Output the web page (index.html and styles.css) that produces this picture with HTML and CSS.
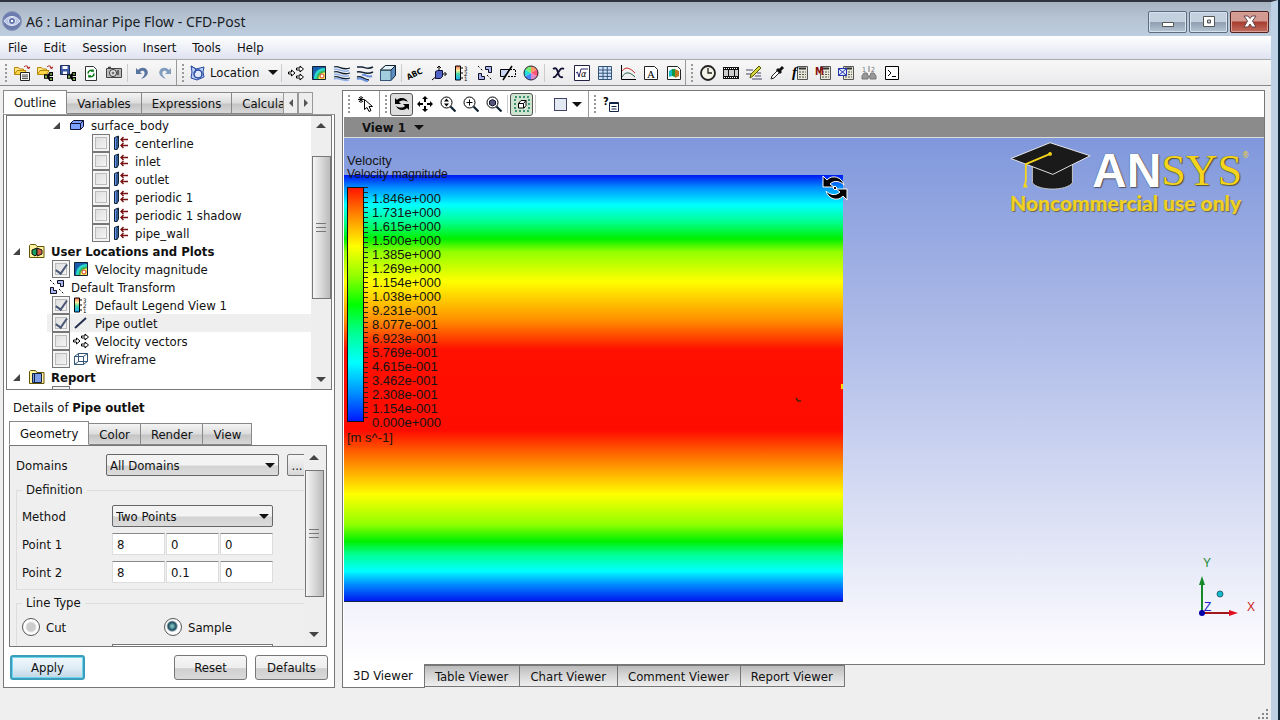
FILE: index.html
```
<!DOCTYPE html>
<html lang="en">
<head>
  <meta charset="UTF-8" />
  <meta name="viewport" content="width=device-width, initial-scale=1.0"/>
  <title>A6 : Laminar Pipe Flow - CFD-Post</title>
  <link rel="stylesheet" href="styles.css">
</head>
<body>

  <!-- shared icons -->
  <svg class="defs" aria-hidden="true">
    <linearGradient id="rainbow" x1="0" y1="0" x2="0" y2="1"><stop offset="0" stop-color="#f65"/><stop offset=".3" stop-color="#fe9"/><stop offset=".6" stop-color="#3fd6b0"/><stop offset="1" stop-color="#2af"/></linearGradient>
    <symbol id="i-folder" viewBox="0 0 16 16"><path d="M.5 9.500V2.500h4l1 1.500h4v2" fill="#ffe680" stroke="#b8860b"/><path d="M.5 9.500l2.500-4h9l-2.500 4z" fill="#ffd84a" stroke="#b8860b"/><path d="M10 2c2-2 4-1 4.500 1M13 2l1.500 2L16 1.500" fill="none" stroke="#a11"/></symbol>
    <symbol id="i-nodes" viewBox="0 0 8 8"><path d="M3 4h2M4 1.500V6.500M4 1.500h1M4 6.500h1" stroke="#000" fill="none"/><path d="M.5 2.500h2.500v3H.5zM5 .5h2.500v2.500H5zM5 5h2.500v2.500H5z" fill="#9d6" stroke="#000"/></symbol>
    <symbol id="i-contour" viewBox="0 0 16 16"><path d="M1.500 1.500h13v13h-13z" fill="#1a5fae" stroke="#123"/><path d="M3 14C3 7 7 3 14 3v11z" fill="#2ad8c8"/><path d="M5.500 14c0-5 3.500-8.500 8.500-8.500V14z" fill="#3fae52"/><path d="M7.500 14C7.500 10 10 7.500 14 7.500V14z" fill="#ffe45c"/><circle cx="11" cy="11" r="2" fill="#fff" stroke="#d0421c"/></symbol>
    <symbol id="i-vector" viewBox="0 0 16 16"><path d="M.5 7h3V5L7 8l-3.500 3V9h-3zM8.500 3H12V1l3.500 3L12 7V5H8.500zM8.500 11H12V9l3.500 3-3.500 3v-2H8.500z" fill="#fff" stroke="#000"/></symbol>
    <symbol id="i-transform" viewBox="0 0 16 16"><path d="M8.500 1.500h6v6h-3v-3h-3zM1.500 8.500h3v3h3v3h-6z" fill="#a9b5ee" stroke="#112"/><path d="M1 1l5 5M10 10l5 5" stroke="#000" stroke-dasharray="2 2"/></symbol>
    <symbol id="i-legend" viewBox="0 0 16 16"><path d="M1.500 1h5v14h-5z" fill="url(#rainbow)" stroke="#000"/><path d="M7 3h2M7 8h2M7 13h2" stroke="#000"/><text x="10" y="5.500" font-size="6">3</text><text x="10" y="10.500" font-size="6">2</text><text x="10" y="15.500" font-size="6">1</text></symbol>
    <symbol id="i-boundary" viewBox="0 0 16 16"><path d="M1.500 2.500l4-1.500v11l-1.500 2.500H1.500z" fill="#5f92f0" stroke="#123"/><path d="M4 3.500v11M4 3.500L5.500 1" stroke="#123"/><path d="M8 4.500h7M8 10.500h7M10.500 2L8 4.500 10.500 7M10.500 8L8 10.500 10.500 13" fill="none" stroke="#711" stroke-width="1.400"/></symbol>
    <symbol id="i-body" viewBox="0 0 16 16"><path d="M1.500 6.500l3-3h10v6l-3 3h-10z" fill="#7da0ff" stroke="#113"/><path d="M1.500 6.500h10v6M11.500 6.500l3-3" fill="none" stroke="#113"/></symbol>
    <symbol id="i-rotate" viewBox="0 0 16 16"><path d="M1 2v6h6L5 6c2-2 6-2 9 0C12 1.500 6 1 3 4zM15 14V8H9l2 2c-2 2-6 2-9 0 2 4.500 8 5 11 2z"/></symbol>
    <symbol id="i-lens" viewBox="0 0 16 16"><circle cx="6.500" cy="6.500" r="5.500" fill="#fff" stroke="#000"/><path d="M10.500 10.500l5 5" stroke="#123" stroke-width="2.200"/></symbol>
    <symbol id="i-calc" viewBox="0 0 16 16"><path d="M5.500 1.500h10v13h-10z" fill="#e8e8d8" stroke="#555"/><path d="M7 3.500h7" stroke="#333" stroke-width="2"/><path d="M7 7h7M7 9.500h7M7 12h7" stroke="#555" stroke-dasharray="2 1"/></symbol>
    <symbol id="i-group" viewBox="0 0 16 16"><path d="M.5 14.500v-12l1-1h5l1.500 2h7v11z" fill="#fff2a0" stroke="#665500"/></symbol>
  </svg>

  <div class="window">
    <header class="titlebar">
      <svg class="app-icon" viewBox="0 0 20 20"><circle cx="10" cy="10" r="9.500" fill="#6c7cae" stroke="#8b98b8"/><path d="M2 10c4-6 12-6 16 0-4 6-12 6-16 0z" fill="#b8c4e4" stroke="#e4eaf8"/><circle cx="10" cy="10" r="3.500" fill="#56699f" stroke="#e8eeff"/><circle cx="10" cy="10" r="1.300" fill="#fff"/></svg>
      <h1>A6 : Laminar Pipe Flow - CFD-Post</h1>
      <div class="window-buttons">
        <button aria-label="Minimize"><svg viewBox="0 0 16 16"><path d="M2.500 8.500h11v4h-11z" fill="#fff" stroke="#555"/></svg></button>
        <button aria-label="Maximize"><svg viewBox="0 0 16 16"><path d="M2.500 2.500h11v10h-11zM6.500 6h3v3h-3z" fill="#fff" fill-rule="evenodd" stroke="#555"/></svg></button>
        <button class="close" aria-label="Close"><svg viewBox="0 0 16 16"><path d="M2 2h4l2 2.500L10 2h4l-3.500 5L14 13h-4L8 10l-2 3H2l3.500-6z" fill="#fff" stroke="#644"/></svg></button>
      </div>
    </header>

    <nav class="menubar">
      <a href="#">File</a>
      <a href="#">Edit</a>
      <a href="#">Session</a>
      <a href="#">Insert</a>
      <a href="#">Tools</a>
      <a href="#">Help</a>
    </nav>

    <div class="toolbar main-toolbar">
      <div class="group">
        <span class="grip"></span>
        <button aria-label="Load results"><svg viewBox="0 0 16 16"><use href="#i-folder" width="16" height="16"/><path d="M6.500 7.500h9v8h-9z" fill="#fff" stroke="#222"/><path d="M8 10h6M8 11.800h6M8 13.600h6" stroke="#444"/></svg></button>
        <button aria-label="Load state"><svg viewBox="0 0 16 16"><use href="#i-folder" width="16" height="16"/><use href="#i-nodes" x="7" y="7" width="9" height="9"/></svg></button>
        <button aria-label="Save state"><svg viewBox="0 0 16 16"><path d="M.5.5h9v9h-9z" fill="#3b5aa5" stroke="#1b2d60"/><path d="M2.500 1h5v3h-5zM3 6.500h4V9H3z" fill="#fff"/><use href="#i-nodes" x="7" y="7" width="9" height="9"/></svg></button>
        <button aria-label="Refresh"><svg viewBox="0 0 16 16"><path d="M2.500 1.500h8l3 3v11h-11z" fill="#fff" stroke="#333"/><path d="M5 8.500c0-3 3-4 5-2.500V4.500M10 6H8M11 8.500c0 3-3 4-5 2.500v1.500M6 11h2" fill="none" stroke="#071" stroke-width="1.500"/></svg></button>
        <button aria-label="Save picture"><svg viewBox="0 0 16 16"><path d="M.5 3.500h15v9H.5z" fill="#bbb" stroke="#444"/><path d="M2 2.500h3M12 5v5" stroke="#444" stroke-width="1.500"/><circle cx="7" cy="8" r="3.500" fill="#eee" stroke="#333"/><circle cx="7" cy="8" r="1.500" fill="#777"/></svg></button>
        <span class="sep"></span>
        <button aria-label="Undo"><svg viewBox="0 0 16 16"><path d="M2 3v6h6L6 7c3-3 6 0 4 3.500-1 1.500-2 2.500-3 3.500 6-2 8-6 6-9-2-3-6-3-9 0z" fill="#58749f"/></svg></button>
        <button aria-label="Redo"><svg viewBox="0 0 16 16"><path d="M14 3v6H8l2-2C7 4 4 7 6 10.500c1 1.500 2 2.500 3 3.500C3 12 1 8 3 5c2-3 6-3 9 0z" fill="#7f9bbe"/></svg></button>
      </div>
      <div class="group">
        <span class="grip"></span>
        <button class="location"><svg viewBox="0 0 16 16"><path d="M1 1l5 3 8-2-1 5 1 5-7 3-6-2 1-6z" fill="#b9cff4" stroke="#2748a0"/><circle cx="8" cy="9" r="4" fill="#dfeaff" stroke="#2748a0" stroke-width="1.500"/><path d="M1 1l5 3-1 4" fill="none" stroke="#2748a0"/></svg>Location<span class="caret"></span></button>
        <span class="sep"></span>
        <button aria-label="Vector"><svg><use href="#i-vector"/></svg></button>
        <button aria-label="Contour"><svg><use href="#i-contour"/></svg></button>
        <button aria-label="Streamline"><svg viewBox="0 0 16 16"><path d="M0 2c5-2 8 4 16 1M0 7c5-2 8 4 16 1M0 12c5-2 8 4 16 1" fill="none" stroke="#123" stroke-width="1.300"/><path d="M0 4.500c5-2 8 4 15 1M0 9.500c5-2 8 4 15 1M0 14c5-2 8 3 15 1" fill="none" stroke="#8fb0ea" stroke-width="1.500"/></svg></button>
        <button aria-label="Particle track"><svg viewBox="0 0 16 16"><path d="M0 2h5c3 0 5 3 11 0M0 7c5-2 8 4 16 0M0 12c5-2 6 3 12 3" fill="none" stroke="#123" stroke-width="1.500"/><path d="M5 10c4-1 5 3 10 1M0 14c5-2 6 2 11 2" fill="none" stroke="#6f93dc" stroke-width="2"/></svg></button>
        <button aria-label="Volume rendering"><svg viewBox="0 0 16 16"><path d="M.5 5l5-4.500h10v10L11 15.500H.5z" fill="#5d8cc0" stroke="#123"/><path d="M.5 5h10.500v10.500H.5z" fill="#a2cddf" stroke="#357"/><path d="M.5 5l5-4.500h10L11 5z" fill="#e2f2f8" stroke="#123"/></svg></button>
        <span class="sep"></span>
        <button aria-label="Text"><svg viewBox="0 0 16 16"><text x="-2" y="11" font-size="8" font-weight="bold" transform="rotate(-25 8 8)">ABC</text></svg></button>
        <button aria-label="Coordinate frame"><svg viewBox="0 0 16 16"><path d="M8 8V1M6 3l2-2 2 2M8 9h7M13.500 7l2 2-2 2M8 9l-7 6" fill="none" stroke="#000"/><path d="M4.500 6.500l2-1h5v6l-2 2h-5z" fill="#5263c8" stroke="#113"/></svg></button>
        <button aria-label="Legend"><svg><use href="#i-legend"/></svg></button>
        <button aria-label="Instance transform"><svg><use href="#i-transform"/></svg></button>
        <button aria-label="Clip plane"><svg viewBox="0 0 16 16"><path d="M.5 4.500h9l-5 7h-4z" fill="#cbd5f5" stroke="#000"/><path d="M10 4.500h5.500v7H7" fill="none" stroke="#000" stroke-dasharray="2 1"/><path d="M12 1L3 15" stroke="#000" stroke-width="1.500"/></svg></button>
        <button aria-label="Color map"><svg viewBox="0 0 16 16"><path d="M8 8V1a7 7 0 0 1 6 3.500z" fill="#f96"/><path d="M8 8l6-3.500a7 7 0 0 1 0 7z" fill="#f57"/><path d="M8 8l6 3.500A7 7 0 0 1 8 15z" fill="#d8c"/><path d="M8 8v7a7 7 0 0 1-6-3.500z" fill="#48f"/><path d="M8 8l-6 3.500a7 7 0 0 1 0-7z" fill="#2dd"/><path d="M8 8L2 4.500A7 7 0 0 1 8 1z" fill="#7e7"/><circle cx="8" cy="8" r="7" fill="none" stroke="#223"/></svg></button>
        <span class="sep"></span>
        <button aria-label="Variables"><svg viewBox="0 0 16 16"><path d="M2 4c3-2 4 0 5 3.500S9 13 12 12M13 4c-3-2-4 1-6 4s-3 5-5 4" fill="none" stroke="#113" stroke-width="1.800"/></svg></button>
        <button aria-label="Expressions"><svg viewBox="0 0 16 16"><path d="M.5.500h15v15H.5z" fill="#fff" stroke="#224"/><path d="M2 8l1.500-1L5 12l2-8h7" fill="none" stroke="#226"/><text x="7" y="12" font-size="9" font-style="italic">α</text></svg></button>
        <button aria-label="Table"><svg viewBox="0 0 16 16"><path d="M1.500 1.500h13v13h-13zM1.500 5h13M1.500 8.200h13M1.500 11.400h13M6 1.500v13M10.300 1.500v13" fill="#d3e2ff" stroke="#357"/></svg></button>
        <button aria-label="Chart"><svg viewBox="0 0 16 16"><path d="M1.500 0v14.500H16" fill="none" stroke="#000"/><path d="M2 6c4-5 8-3 13 2" fill="none" stroke="#c22"/><path d="M2 12c3-5 7-6 13 0" fill="none" stroke="#264"/></svg></button>
        <button aria-label="Comment"><svg viewBox="0 0 16 16"><path d="M1.500 1.500h10l3 3v10h-13z" fill="#fff" stroke="#222"/><text x="4" y="12.500" font-size="11" font-family="Liberation Serif, serif">A</text></svg></button>
        <button aria-label="Figure"><svg viewBox="0 0 16 16"><path d="M1.500 1.500h10l3 3v10h-13z" fill="#fff" stroke="#222"/><path d="M3 6l3-2v7l-3 1z" fill="#1bc"/><path d="M6 4h3v8l-3-1z" fill="#194"/><path d="M9 4l4 2v5l-4 2z" fill="#b72"/></svg></button>
      </div>
      <div class="group">
        <span class="grip"></span>
        <button aria-label="Timestep selector"><svg viewBox="0 0 16 16"><circle cx="8" cy="8" r="7" fill="#f4f4e8" stroke="#222" stroke-width="1.800"/><path d="M8 3v5h4" fill="none" stroke="#222" stroke-width="1.300"/></svg></button>
        <button aria-label="Animation"><svg viewBox="0 0 16 16"><path d="M0 2h16v12H0z" fill="#111"/><path d="M1 3.500h14M1 12.500h14" stroke="#fff" stroke-dasharray="1 1"/><path d="M1 5h4v6H1zM6 5h5v6H6zM12 5h3v6h-3z" fill="#ccc"/></svg></button>
        <button aria-label="Quick editor"><svg viewBox="0 0 16 16"><path d="M0 5h7M0 9h5M6 14h10M9 11h6M11 8h4" stroke="#446"/><path d="M4 13l1-4 8-8 2 2-8 8z" fill="#d5d63a" stroke="#550"/></svg></button>
        <button aria-label="Probe"><svg viewBox="0 0 16 16"><path d="M2 14l1-3 6-6 2 2-6 6z" fill="#fff" stroke="#222"/><path d="M8 4l4 4M10 6l4-4" stroke="#111" stroke-width="3"/></svg></button>
        <button aria-label="Function calculator"><svg viewBox="0 0 16 16"><use href="#i-calc" width="16" height="16"/><text x="0" y="12" font-size="15" font-weight="bold" font-style="italic" font-family="Liberation Serif, serif">f</text></svg></button>
        <button aria-label="Macro calculator"><svg viewBox="0 0 16 16"><use href="#i-calc" width="16" height="16"/><text x="0" y="10" font-size="10" font-weight="bold" fill="#811">M</text></svg></button>
        <button aria-label="Mesh calculator"><svg viewBox="0 0 16 16"><use href="#i-calc" width="16" height="16"/><path d="M.5 3.500h8v7h-8zM.5 3.500l8 7M8.500 3.500l-8 7" fill="#dfe7ff" stroke="#23a"/></svg></button>
        <button aria-label="Compare"><svg viewBox="0 0 16 16"><text x="1" y="7" font-size="7" fill="#777">1</text><text x="10" y="7" font-size="7" fill="#777">2</text><path d="M8 1v6" stroke="#777"/><path d="M1 14v-3l2-3h3l1 3h2l1-3h3l2 3v3H9v-2H7v2z" fill="#999" stroke="#777"/></svg></button>
        <button aria-label="Command editor"><svg viewBox="0 0 16 16"><path d="M1.500 1.500h13v13h-13z" fill="#fff" stroke="#000"/><path d="M4 5l3 3-3 3M8 11.500h4" fill="none" stroke="#000"/></svg></button>
      </div>
    </div>

    <main class="workspace">
      <aside class="side">
        <div class="tabs outline-tabs">
          <button class="tab active">Outline</button>
          <button class="tab">Variables</button>
          <button class="tab">Expressions</button>
          <button class="tab cut">Calculators</button>
          <button class="tab-scroll" aria-label="Previous tab"><span class="left-arrow"></span></button>
          <button class="tab-scroll" aria-label="Next tab"><span class="right-arrow"></span></button>
        </div>

        <div class="side-body">
          <div class="tree-box">
            <ul class="tree">
              <li class="level-2"><span class="twisty"></span><svg><use href="#i-body"/></svg>surface_body</li>
              <li class="level-3"><input type="checkbox" id="centerline"><svg><use href="#i-boundary"/></svg><label for="centerline">centerline</label></li>
              <li class="level-3"><input type="checkbox" id="inlet"><svg><use href="#i-boundary"/></svg><label for="inlet">inlet</label></li>
              <li class="level-3"><input type="checkbox" id="outlet"><svg><use href="#i-boundary"/></svg><label for="outlet">outlet</label></li>
              <li class="level-3"><input type="checkbox" id="periodic"><svg><use href="#i-boundary"/></svg><label for="periodic">periodic 1</label></li>
              <li class="level-3"><input type="checkbox" id="shadow"><svg><use href="#i-boundary"/></svg><label for="shadow">periodic 1 shadow</label></li>
              <li class="level-3"><input type="checkbox" id="wall"><svg><use href="#i-boundary"/></svg><label for="wall">pipe_wall</label></li>
              <li class="level-0"><span class="twisty"></span><svg viewBox="0 0 16 16"><use href="#i-group" width="16" height="16"/><path d="M3 7l5-2v6l-2 2-3-2z" fill="#15a05c" stroke="#111"/><path d="M8 5l5 2v4l-5 2z" fill="#d06040" stroke="#111"/></svg>User Locations and Plots</li>
              <li class="level-1"><input type="checkbox" id="magnitude" checked><svg><use href="#i-contour"/></svg><label for="magnitude">Velocity magnitude</label></li>
              <li class="level-1 plain"><svg><use href="#i-transform"/></svg>Default Transform</li>
              <li class="level-1"><input type="checkbox" id="legend-view" checked><svg><use href="#i-legend"/></svg><label for="legend-view">Default Legend View 1</label></li>
              <li class="level-1 selected"><input type="checkbox" id="pipe-outlet" checked><svg viewBox="0 0 16 16"><path d="M2 13L13 3" stroke="#24324f" stroke-width="2"/></svg><label for="pipe-outlet">Pipe outlet</label></li>
              <li class="level-1"><input type="checkbox" id="vectors"><svg><use href="#i-vector"/></svg><label for="vectors">Velocity vectors</label></li>
              <li class="level-1"><input type="checkbox" id="wireframe"><svg viewBox="0 0 16 16"><path d="M1.500 5.500h9v8h-9zM5.500 2.500h9v8h-9zM1.500 5.500l4-3M10.500 5.500l4-3M1.500 13.500l4-3M10.500 13.500l4-3" fill="none" stroke="#357"/></svg><label for="wireframe">Wireframe</label></li>
              <li class="level-0"><span class="twisty"></span><svg viewBox="0 0 16 16"><use href="#i-group" width="16" height="16"/><path d="M3.500 4.500h9v9h-9z" fill="#7d9ce8" stroke="#124"/><path d="M5.500 5v8" stroke="#124"/></svg>Report</li>
              <li class="level-1"><input type="checkbox" aria-label="Title page" checked></li>
            </ul>
            <div class="scrollbar tree-scroll"><span class="up-arrow"></span><div class="thumb"></div><span class="down-arrow"></span></div>
          </div>

          <p class="details-title">Details of <b>Pipe outlet</b></p>

          <div class="tabs detail-tabs">
            <button class="tab active">Geometry</button>
            <button class="tab">Color</button>
            <button class="tab">Render</button>
            <button class="tab">View</button>
          </div>
          <div class="detail-box">
            <form class="geometry">
              <div class="row domains">
                <label for="domains">Domains</label>
                <span class="select"><select id="domains"><option>All Domains</option></select></span>
                <button type="button" class="more">...</button>
              </div>
              <fieldset>
                <legend>Definition</legend>
                <div class="row">
                  <label for="method">Method</label>
                  <span class="select"><select id="method"><option>Two Points</option></select></span>
                </div>
                <div class="row">
                  <label for="p1x">Point 1</label>
                  <div class="coords">
                    <input type="text" id="p1x" value="8">
                    <input type="text" aria-label="Point 1 Y" value="0">
                    <input type="text" aria-label="Point 1 Z" value="0">
                  </div>
                </div>
                <div class="row">
                  <label for="p2x">Point 2</label>
                  <div class="coords">
                    <input type="text" id="p2x" value="8">
                    <input type="text" aria-label="Point 2 Y" value="0.1">
                    <input type="text" aria-label="Point 2 Z" value="0">
                  </div>
                </div>
              </fieldset>
              <fieldset class="line-type">
                <legend>Line Type</legend>
                <div class="radios">
                  <label><input type="radio" name="line">Cut</label>
                  <label><input type="radio" name="line" checked>Sample</label>
                </div>
                <input type="text" class="samples" aria-label="Samples">
              </fieldset>
            </form>
            <div class="scrollbar detail-scroll"><span class="up-arrow"></span><div class="thumb"></div><span class="down-arrow"></span></div>
          </div>

          <div class="actions">
            <button class="push apply">Apply</button>
            <button class="push">Reset</button>
            <button class="push">Defaults</button>
          </div>
        </div>
      </aside>

      <section class="viewer">
        <div class="viewer-frame">
          <div class="toolbar viewer-toolbar">
            <div class="group">
              <span class="grip"></span>
              <button class="pick" aria-label="Select"><svg viewBox="0 0 16 16"><path d="M3 0v7M0 3.500h6M1 1l4 5M5 1L1 6" stroke="#000"/><path d="M6.500 3.500v10l2.500-2 2 4 2-1-2-4h3.500z" fill="#fff" stroke="#000"/></svg></button>
            </div>
            <div class="group">
              <span class="grip"></span>
              <button class="pressed" aria-label="Rotate"><svg><use href="#i-rotate"/></svg></button>
              <button aria-label="Pan"><svg viewBox="0 0 16 16"><path d="M8 0l3 3H9v3H7V3H5zM8 16l3-3H9v-3H7v3H5zM0 8l3-3v2h3v2H3v2zM16 8l-3-3v2h-3v2h3v2z"/></svg></button>
              <button aria-label="Zoom"><svg viewBox="0 0 16 16"><use href="#i-lens" width="16" height="16"/><path d="M6.500 2.500l2.500 3H4zM6.500 10.500l2.500-3H4z"/></svg></button>
              <button aria-label="Zoom box"><svg viewBox="0 0 16 16"><use href="#i-lens" width="16" height="16"/><path d="M6.500 3.500v6M3.500 6.500h6" stroke="#000"/></svg></button>
              <button aria-label="Fit view"><svg viewBox="0 0 16 16"><use href="#i-lens" width="16" height="16"/><path d="M3.500 5l3-1.500 3 1.500v3.500l-3 1.500-3-1.500z" fill="#557" stroke="#113"/></svg></button>
              <span class="sep"></span>
              <button class="pressed green" aria-label="Highlight"><svg viewBox="0 0 16 16"><path d="M1 1h14v14H1z" fill="none" stroke="#175" stroke-width="1.500" stroke-dasharray="2 2"/><path d="M4.500 7.500l2.500-3h5v5l-2 2.500H4.500zM4.500 7.500h5v4.500M9.500 7.500l2.500-3" fill="#fff" stroke="#000"/></svg></button>
              <span class="sep"></span>
              <button class="layout" aria-label="Viewport layout"><span class="swatch"></span><span class="caret"></span></button>
            </div>
            <div class="group">
              <span class="grip"></span>
              <button aria-label="Help on object"><svg viewBox="0 0 16 16"><text x="0" y="9" font-size="11" font-weight="bold">?</text><path d="M6.500 6.500h9v9h-9z" fill="#fff" stroke="#124"/><path d="M6 7.500h10M8.500 10.500h5M8.500 13h5" stroke="#124"/></svg></button>
            </div>
          </div>
          <button class="view-name">View 1<span class="caret"></span></button>

          <div class="canvas">
            <div class="pipe"></div>
            <div class="color-legend">
              <p class="legend-title">Velocity</p>
              <p class="legend-name">Velocity magnitude</p>
              <div class="scale">
                <div class="color-bar"></div>
                <div class="ticks"></div>
                <ol>
                  <li>1.846e+000</li>
                  <li>1.731e+000</li>
                  <li>1.615e+000</li>
                  <li>1.500e+000</li>
                  <li>1.385e+000</li>
                  <li>1.269e+000</li>
                  <li>1.154e+000</li>
                  <li>1.038e+000</li>
                  <li>9.231e-001</li>
                  <li>8.077e-001</li>
                  <li>6.923e-001</li>
                  <li>5.769e-001</li>
                  <li>4.615e-001</li>
                  <li>3.462e-001</li>
                  <li>2.308e-001</li>
                  <li>1.154e-001</li>
                  <li>0.000e+000</li>
                </ol>
              </div>
              <p class="legend-unit">[m s^-1]</p>
            </div>

            <div class="logo">
              <div class="logo-mark">
                <svg viewBox="0 0 88 52"><path d="M24 24v20c6 9 37 9 43 0V24z" fill="#1a1a1a" stroke="#ccc"/><path d="M1 18L43 1l43 14-40 20z" fill="#1a1a1a" stroke="#eee"/><path d="M43 13L17 24v20" fill="none" stroke="#f4d41c" stroke-width="2"/><circle cx="43" cy="13" r="2" fill="#f4d41c"/><path d="M16 42l-2 7h5z" fill="#f4d41c"/></svg>
                <span class="logo-an">AN</span><span class="logo-sys">SYS</span><span class="logo-reg">®</span>
              </div>
              <p>Noncommercial use only</p>
            </div>

            <svg class="cursor" viewBox="0 0 26 26"><path d="M1 1v11h11L8 9c4-4 10-3 14 1C20 2 10-1 5 5zM25 25V14H14l4 3c-4 4-10 3-14-1 2 8 12 11 17 5z" fill="#000" stroke="#fff"/><path d="M13 11l2 2-2 2-2-2z" fill="#000" stroke="#fff"/></svg>

            <svg class="probe-mark" viewBox="0 0 8 8"><path d="M1 2l2 3h3" fill="none" stroke="#420" stroke-width="1.500"/></svg>

            <svg class="triad" viewBox="0 0 60 64">
              <path d="M7 54V22" stroke="#178a2e" stroke-width="2"/>
              <path d="M7 17l3 9H4z" fill="#178a2e"/>
              <path d="M8 54h28" stroke="#a0181c" stroke-width="2"/>
              <path d="M43 54l-9-3v6z" fill="#e01020"/>
              <circle cx="7" cy="54" r="3" fill="#00a"/>
              <circle cx="25" cy="35" r="3" fill="#1bc" stroke="#267"/>
              <text x="8" y="8" fill="#178a2e">Y</text>
              <text x="9" y="52" fill="#22c">Z</text>
              <text x="52" y="52" fill="#c22">X</text>
            </svg>
          </div>
        </div>

        <div class="viewer-tabs">
          <button class="active">3D Viewer</button>
          <button>Table Viewer</button>
          <button>Chart Viewer</button>
          <button>Comment Viewer</button>
          <button>Report Viewer</button>
        </div>
      </section>
    </main>

    <footer class="statusbar">
      <svg viewBox="0 0 12 12"><path d="M10 1v2M10 5v2M10 9v2M6 5v2M6 9v2M2 9v2" stroke="#888" stroke-width="2"/></svg>
    </footer>
  </div>
</body>
</html>
```
FILE: styles.css
```
* {box-sizing: border-box;}
body {margin: 0; height: 100vh; font-family: "DejaVu Sans Condensed", "Noto Sans", sans-serif; font-size: 13px; color: #111; background-color: #10283c; overflow: hidden;}
button, input, select {font: inherit; color: inherit; margin: 0; padding: 0;}
button {border: none; background: none;}
svg {width: 16px; height: 16px; flex: none; overflow: visible;}
.defs {position: absolute; width: 0; height: 0;}

.window {height: 100vh; display: flex; flex-direction: column; background-color: #efeff0; border-top: 2px solid #303440; border-right: 7px solid #bdd2e4; margin-right: 2px;}

.titlebar {height: 34px; flex: none; display: flex; align-items: center; gap: 4px; padding: 4px 2px 0; background: linear-gradient(#a6b2c0, #b7c4d3 50%, #bccddf);}
.titlebar h1 {flex: 1; margin: 0; font: 14px "Noto Sans", sans-serif; color: #1a1d24;}
.app-icon {width: 20px; height: 20px;}
.window-buttons {display: flex; gap: 2px; margin-top: 2px;}
.window-buttons button {width: 39px; height: 22px; display: flex; align-items: center; justify-content: center; border: 1px solid #5d6d80; border-radius: 2px; background: linear-gradient(#c3d0dd 50%, #8e9daf 50%, #b4c5d4); box-shadow: inset 0 0 0 1px #d8e2ec;}
.window-buttons .close {border-color: #52221f; background: linear-gradient(#d39a92 45%, #a63c30 50%, #c36e5e); box-shadow: inset 0 0 0 1px #d9a199;}

.menubar {height: 23px; flex: none; display: flex; align-items: center; gap: 16px; padding-left: 8px; background: linear-gradient(#fff, #dfe3f1);}
.menubar a {color: inherit; text-decoration: none;}

.toolbar {display: flex; flex: none;}
.group {display: flex; align-items: center; border-right: 1px solid #999; padding-left: 2px;}
.group:last-child {border-right: none;}
.toolbar button {width: 23px; height: 23px; display: flex; align-items: center; justify-content: center;}
.grip {width: 2px; height: 18px; margin: 0 3px; background: repeating-linear-gradient(#999 0 2px, transparent 2px 4px);}
.sep {width: 1px; height: 18px; margin: 0 2px; background-color: #ccc;}
.caret {width: 0; height: 0; border: 5px solid transparent; border-top-color: #111; border-bottom: none;}
.main-toolbar {height: 27px; border-top: 1px solid #aaa; border-bottom: 1px solid #888; background: linear-gradient(#f8f8f8, #eaeaec);}
.toolbar .location {width: auto; gap: 4px; padding: 0 1px 0 3px;}
.location .caret {margin-left: 5px;}

.workspace {flex: 1; min-height: 0; display: flex; gap: 7px; padding: 4px 6px 0 3px;}
.side {width: 332px; flex: none; display: flex; flex-direction: column;}

.tabs {display: flex; align-items: flex-end; flex: none;}
.tab {height: 22px; padding: 0 10px; white-space: nowrap; border: 1px solid #888; border-left-width: 0; background: linear-gradient(#f4f4f4, #dcdcdc 50%, #c4c4c4 55%, #d8d8d8);}
.tab.active {height: 24px; border-left-width: 1px; border-bottom-color: #fff; background: #fff;}
.tab.cut {flex: 1; min-width: 0; overflow: hidden; text-align: left; border-right: none;}
.outline-tabs {padding-right: 22px;}
.tab-scroll {width: 15px; height: 22px; display: flex; align-items: center; justify-content: center; border: 1px solid #999; background-color: #eee;}
.left-arrow, .right-arrow {width: 0; height: 0; border: 4px solid transparent;}
.left-arrow {border-right-color: #555; border-left: none;}
.right-arrow {border-left-color: #555; border-right: none;}

.side-body {flex: 1; min-height: 0; display: flex; flex-direction: column; padding: 0 2px; border: 1px solid #777; border-top-color: #999; background-color: #fff;}
.tree-box {flex: 276; min-height: 0; display: flex; border: 1px solid #777; overflow: hidden; background-color: #fff;}
.tree {flex: 1; margin: 0; padding: 0; list-style: none; overflow: hidden;}
.tree li {height: 18px; display: flex; align-items: center; gap: 6px; white-space: nowrap;}
.tree .level-0 {padding-left: 6px; font-weight: bold;}
.tree .level-1 {padding-left: 45px;}
.tree .level-1.plain {padding-left: 42px;}
.tree .level-2 {padding-left: 46px;}
.tree .level-3 {padding-left: 85px;}
.tree input + svg {margin-left: -3px;}
.tree .selected {background: linear-gradient(90deg, #fff 40px, #efefef 40px);}
.twisty {width: 0; height: 0; border-left: 7px solid transparent; border-bottom: 7px solid #444; margin-right: 3px;}
.tree input {appearance: none; width: 18px; height: 18px; flex: none; border: 1px solid #777; background: linear-gradient(135deg, #d8d8d8, #fafafa); box-shadow: inset 0 0 0 2px #f4f4f4, inset 0 0 0 3px #bbb;}
.tree input:checked::after {content: ""; display: block; width: 5px; height: 10px; margin: 1px 0 0 5px; border: solid #4b5877; border-width: 0 2px 2px 0; transform: rotate(35deg);}

.scrollbar {width: 20px; flex: none; display: flex; flex-direction: column; align-items: center; padding: 7px 0; background-color: #eee;}
.thumb {width: 19px; display: flex; align-items: center; justify-content: center; border: 1px solid #777; background: linear-gradient(90deg, #f6f6f6, #d8d8d8 50%, #bbb);}
.thumb::before {content: ""; width: 10px; height: 9px; background: repeating-linear-gradient(#777 0 1px, transparent 1px 4px);}
.up-arrow, .down-arrow {width: 0; height: 0; border: 5px solid transparent;}
.up-arrow {border-bottom-color: #444; border-top: none;}
.down-arrow {border-top-color: #444; border-bottom: none; margin-top: auto;}
.tree-scroll .thumb {height: 55%; margin-top: 28px;}
.detail-scroll {width: 22px; padding: 9px 2px 9px 0;}
.detail-scroll .thumb {height: 70%; margin-top: 10px;}

.details-title {margin: 0; padding: 10px 7px 5px; line-height: 16px; flex: none;}
.detail-tabs {padding-left: 3px;}
.detail-box {flex: 202; min-height: 0; display: flex; margin: 0 5px 0 3px; border: 1px solid #777; background-color: #efefef; overflow: hidden;}
.geometry {flex: 1; min-width: 0; padding: 8px 0 0 6px; overflow: hidden;}
.row {display: flex; align-items: center; height: 22px; margin-bottom: 6px;}
.row label {width: 90px; flex: none;}
.select {position: relative; width: 161px; display: flex; flex: none;}
.select::after {content: ""; position: absolute; right: 4px; top: 9px; border: 5px solid transparent; border-top-color: #111; border-bottom: none; pointer-events: none;}
.select select {appearance: none; width: 100%; height: 22px; padding: 0 3px; border: 1px solid #666; border-radius: 2px; background: linear-gradient(#f3f3f3 50%, #d2d2d2 55%, #dcdcdc);}
.domains .select {width: 173px;}
.more {width: 26px; height: 22px; margin-left: 8px; flex: none; border: 1px solid #777; border-radius: 2px; padding-right: 6px; background: linear-gradient(#f6f6f6, #d8d8d8);}
fieldset {min-width: 0; margin: 0; padding: 7px 0 0 5px; border: 1px solid #ddd; border-right: none;}
legend {padding: 0 4px; line-height: 16px;}
.coords {display: flex; gap: 1px; width: 161px;}
.coords input {flex: 1; min-width: 0; height: 22px; padding: 0 4px; border: 1px solid #ddd; border-top-color: #888; background-color: #fff;}
.line-type {margin-top: 5px; border-bottom: none;}
.radios {display: grid; grid-template-columns: 142px 1fr;}
.radios label {display: flex; align-items: center; gap: 6px; height: 18px;}
.radios input {appearance: none; width: 18px; height: 18px; border: 1px solid #555; border-radius: 50%; background: radial-gradient(#ccc 4px, #fff 6px);}
.radios input:checked {background: radial-gradient(circle at 45% 45%, #7bb 1px, #1d4a5c 4px, #fff 6px);}
.samples {display: block; width: 161px; height: 22px; margin: 8px 0 0 90px; border: 1px solid #777;}

.actions {display: flex; gap: 8px; padding: 8px 4px 7px; flex: none;}
.push {width: 73px; height: 25px; border: 1px solid #777; border-radius: 3px; background: linear-gradient(#f6f6f6, #eee 50%, #d0d0d0 55%, #dadada);}
.apply {width: 75px; margin-right: auto; border: 2px solid #3c9dba; background: linear-gradient(#f0f8fc, #e0edf5 50%, #c0d6e4); box-shadow: inset 0 0 0 1px #6fd6f2;}

.viewer {flex: 1; min-width: 0; display: flex; flex-direction: column;}
.viewer-frame {flex: 1; min-height: 0; display: flex; flex-direction: column; border: 1px solid #777; background-color: #fff;}
.viewer-toolbar {height: 26px; border-bottom: none;}
.viewer-toolbar .pick {width: 26px;}
.toolbar .pressed {border: 1px solid #555; border-radius: 3px; background-color: #ddd;}
.toolbar .green {background-color: #cfe4cf;}
.viewer-toolbar .layout {width: 50px; gap: 5px; padding-left: 10px;}
.swatch {width: 13px; height: 13px; border: 1px solid #446; background-color: #e3e9f2;}
.view-name {height: 21px; flex: none; display: flex; align-items: center; gap: 8px; padding-left: 18px; margin-left: 1px; font-weight: bold; background-color: #8b8b8b; border-bottom: 1px solid #ddd;}
.canvas {flex: 1; min-height: 0; margin-left: 1px; position: relative; overflow: hidden; background: linear-gradient(#8098dc, #a5b4e5 30%, #c9d1f0 58%, #e2e6f6 78%, #f6f6fd 92%, #fff);}

/* contour plot of the velocity field */
.pipe {position: absolute; left: 0; top: 7%; bottom: 11.7%; width: 54.2%; border-bottom: 1px solid #124; background: linear-gradient(#0018f0, #0090ff 3%, #00ffff 7%, #00ff90 11%, #00f000 15%, #90ff00 18%, #ff0 25%, #ff9000 34%, #ff1000 41%, #ff0c00 60%, #ff9000 68%, #ff0 75%, #90ff00 82%, #00f000 86%, #00ff90 89%, #0ff 93%, #0090ff 96%, #0018f0);}
.pipe::after {content: ""; position: absolute; right: 0; top: 49%; width: 2px; height: 5px; background-color: #fd0;}
.color-legend {position: absolute; left: 3px; top: 15px; font-family: "Liberation Sans", sans-serif; font-size: 13px; color: #141414;}
.color-legend p {margin: 0; line-height: 16px;}
.color-legend .legend-name {font-size: 12px; line-height: 10px;}
.scale {display: flex; margin-top: 8px;}
.color-bar {width: 17px; height: 235px; border: 1px solid #111; background: linear-gradient(#ff1500, #ff8a00 12%, #ff0 25%, #90ff00 38%, #0f0 50%, #00ff90 62%, #0ff 75%, #0090ff 88%, #0018ff);}
.ticks {width: 4px; height: 235px; background: repeating-linear-gradient(#222 0 1px, transparent 1px 5px);}
.scale ol {margin: 5px 0 0 4px; padding: 0; list-style: none; line-height: 14px;}
.logo {position: absolute; right: 16px; top: 3px; width: 238px;}
.logo-mark {display: flex; height: 50px; line-height: 60px; white-space: nowrap;}
.logo svg {width: 82px; height: 50px;}
.logo-an {font-family: "Liberation Sans", sans-serif; font-size: 48px; font-weight: bold; color: #fff; text-shadow: 0 0 1px #334, 1px 1px 1px #556;}
.logo-sys {font-family: "Liberation Serif", serif; font-size: 44px; color: #f4d41c; text-shadow: 0 0 1px #442, 1px 1px 1px #553;}
.logo-reg {font-size: 8px; line-height: 30px; color: #f4d41c;}
.logo p {margin: 0; font-family: Lato, sans-serif; font-size: 21px; font-weight: 900; line-height: 24px; white-space: nowrap; color: #f0d020; text-shadow: 1px 1px 1px #665;}
.cursor {position: absolute; left: 52%; top: 7%; width: 26px; height: 26px;}
.probe-mark {position: absolute; left: 49%; top: 49%; width: 8px; height: 8px;}
.triad {position: absolute; right: 8px; bottom: 41px; width: 62px; height: 64px; font: 12px "Liberation Sans", sans-serif;}

.viewer-tabs {display: flex; align-items: flex-start; flex: none; height: 23px;}
.viewer-tabs button {height: 22px; padding: 0 11px 0 10px; border: 1px solid #777; border-left: none; background: linear-gradient(#bbb, #d5d5d5 45%, #eee);}
.viewer-tabs .active {height: 24px; margin-top: -1px; border-left: 1px solid #777; border-top: none; background: #fff;}

.statusbar {height: 32px; flex: none; display: flex; justify-content: flex-end; align-items: flex-end; padding-right: 2px;}
.statusbar svg {width: 12px; height: 12px;}
```
